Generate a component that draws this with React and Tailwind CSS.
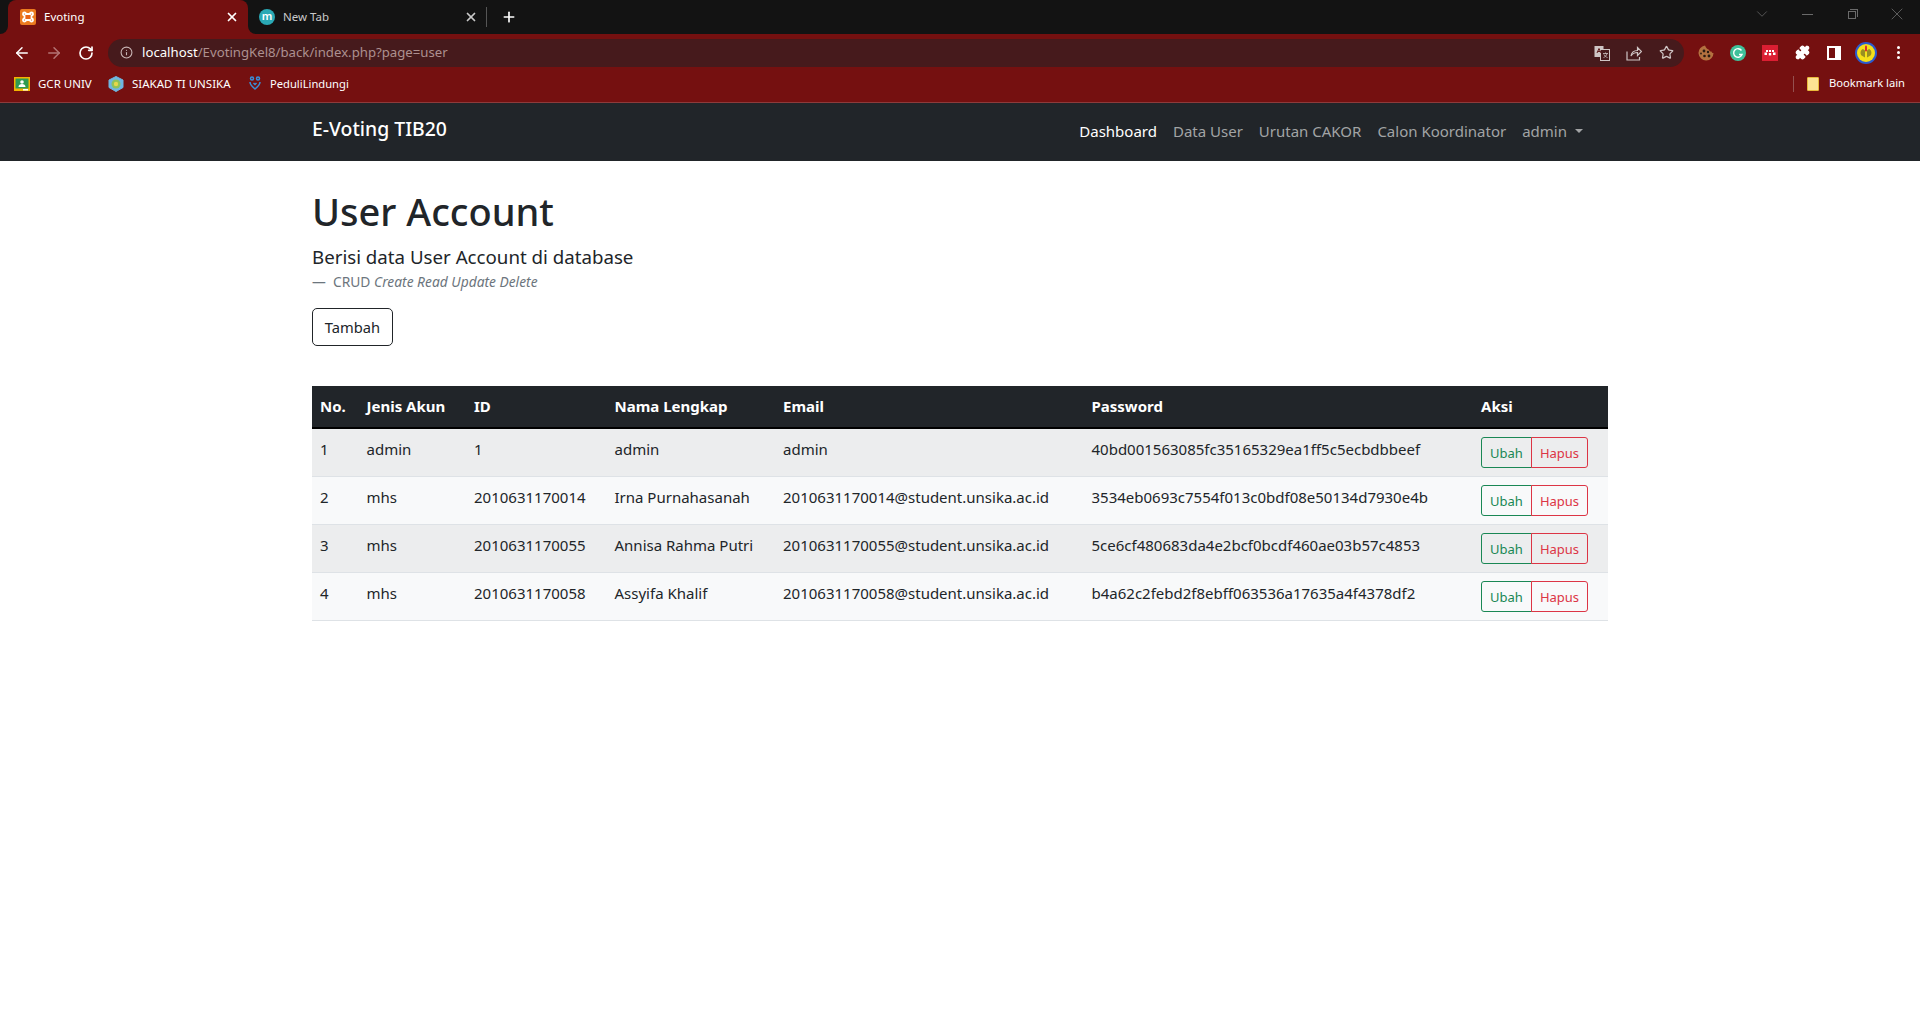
import { ArrowLeft, ArrowRight, RotateCw, Info, X, Plus, Star, Puzzle, ChevronDown } from 'lucide-react';

const users = [
  { no: 1, jenis: 'admin', id: '1', nama: 'admin', email: 'admin', password: '40bd001563085fc35165329ea1ff5c5ecbdbbeef' },
  { no: 2, jenis: 'mhs', id: '2010631170014', nama: 'Irna Purnahasanah', email: '2010631170014@student.unsika.ac.id', password: '3534eb0693c7554f013c0bdf08e50134d7930e4b' },
  { no: 3, jenis: 'mhs', id: '2010631170055', nama: 'Annisa Rahma Putri', email: '2010631170055@student.unsika.ac.id', password: '5ce6cf480683da4e2bcf0bcdf460ae03b57c4853' },
  { no: 4, jenis: 'mhs', id: '2010631170058', nama: 'Assyifa Khalif', email: '2010631170058@student.unsika.ac.id', password: 'b4a62c2febd2f8ebff063536a17635a4f4378df2' },
];

function XamppIcon() {
  return (
    <svg width="16" height="16" viewBox="0 0 16 16" className="shrink-0">
      <rect width="16" height="16" rx="2" fill="#ec7a1f" />
      <path d="M4.500 3.500a1.500 1.500 0 0 1 1.500 1.500h4a1.500 1.500 0 0 1 3 0a1.500 1.500 0 0 1-1.500 1.500v3a1.500 1.500 0 0 1 0 3a1.500 1.500 0 0 1-1.500-1.500H6a1.500 1.500 0 0 1-3 0a1.500 1.500 0 0 1 1.500-1.500v-3a1.500 1.500 0 0 1 0-3z" fill="#e8641a" stroke="#fff" strokeWidth="1.800" />
    </svg>
  );
}

function MeetIcon() {
  return (
    <div className="w-4 h-4 rounded-full bg-[#2aa9b5] text-white text-[11px] leading-[14px] text-center font-semibold shrink-0">m</div>
  );
}

function ClassroomIcon() {
  return (
    <svg width="16" height="14" viewBox="0 0 16 14" className="shrink-0">
      <rect width="16" height="14" fill="#f4b400" />
      <rect x="1.500" y="1.500" width="13" height="10" fill="#2e9b52" />
      <circle cx="8" cy="5" r="1.800" fill="#fff" />
      <path d="M4.500 10c0-2 1.500-3 3.500-3s3.500 1 3.500 3z" fill="#fff" />
      <rect x="9" y="12" width="5" height="1.500" fill="#fff" />
    </svg>
  );
}

function SiakadIcon() {
  return (
    <svg width="16" height="16" viewBox="0 0 16 16" className="shrink-0">
      <path d="M8 0.500l7 3.500v7.500L8 15.500l-7-4V4z" fill="#6fb6e0" strokeLinejoin="round" stroke="#6fb6e0" />
      <circle cx="8" cy="8" r="4.500" fill="#8fc25a" />
      <circle cx="8" cy="8" r="2.200" fill="#e6d84a" />
    </svg>
  );
}

function PeduliIcon() {
  return (
    <svg width="12" height="14" viewBox="0 0 12 14" fill="none" stroke="#3a8fd8" strokeWidth="1.500" className="shrink-0">
      <circle cx="3" cy="2.500" r="1.500" />
      <circle cx="9" cy="2.500" r="1.500" />
      <path d="M1 6c0 3 2.500 5 5 7c2.500-2 5-4 5-7" />
      <path d="M4.500 7l1.500 1.500L7.500 7" />
    </svg>
  );
}

function TranslateIcon() {
  return (
    <svg width="16" height="16" viewBox="0 0 16 16" className="shrink-0">
      <rect x="0.500" y="1" width="9" height="11" fill="#cfc5c5" />
      <rect x="6.500" y="4.500" width="9" height="11" fill="#461a1c" stroke="#cfc5c5" />
      <path d="M3 8l2-4.500L7 8M3.700 6.500h2.600" fill="none" stroke="#5a1a1a" strokeWidth="1" />
      <path d="M9 8.500h5M11.500 7.500v1M13 8.500c-.5 2-2 3.500-3.500 4M10 9.500c.5 1.500 2 2.500 3.500 3" fill="none" stroke="#cfc5c5" strokeWidth="0.800" />
    </svg>
  );
}

function ShareIcon() {
  return (
    <svg width="16" height="16" viewBox="0 0 16 16" fill="none" stroke="#cfc5c5" strokeWidth="1.200" className="shrink-0">
      <path d="M1 6.500V15h12.500v-3" />
      <path d="M5 11c.5-3.500 3-5.500 6.500-5.500V2.500L15.500 6.500l-4 4V7.500C9 7.500 6.500 8.500 5 11z" />
    </svg>
  );
}

function CookieIcon() {
  return (
    <svg width="16" height="16" viewBox="0 0 16 16" className="shrink-0">
      <path d="M7 .5a7.500 7.500 0 1 0 8.500 7.500c-1 .2-2-.5-2-1.500-1.200.2-2.300-.6-2.500-1.800C9.500 4.500 8 3 7 .5z" fill="#b4713f" />
      <circle cx="6" cy="6" r="1.400" fill="#2a1a12" />
      <circle cx="10" cy="7" r="1.200" fill="#2a1a12" />
      <circle cx="11" cy="11" r="1.400" fill="#2a1a12" />
      <circle cx="6.500" cy="11" r="1.300" fill="#2a1a12" />
      <circle cx="3" cy="8.500" r="0.900" fill="#2a1a12" />
    </svg>
  );
}

function GrammarlyIcon() {
  return (
    <svg width="16" height="16" viewBox="0 0 16 16" className="shrink-0">
      <circle cx="8" cy="8" r="8" fill="#3fc09a" />
      <path d="M11.500 5.500A4.300 4.300 0 1 0 12 9.500H9" fill="none" stroke="#fff" strokeWidth="1.400" />
    </svg>
  );
}

function MendeleyIcon() {
  return (
    <svg width="16" height="16" viewBox="0 0 16 16" className="shrink-0">
      <rect width="16" height="16" fill="#dc1e32" />
      <g fill="#fff">
        <rect x="4" y="5" width="2" height="2" />
        <rect x="7" y="5" width="2" height="2" />
        <rect x="10" y="5" width="2" height="2" />
        <rect x="2.500" y="7.500" width="2.500" height="2.500" />
        <rect x="6.800" y="8" width="2.400" height="2.400" />
        <rect x="11" y="7.500" width="2.500" height="2.500" />
      </g>
    </svg>
  );
}

function SidePanelIcon() {
  return (
    <svg width="14" height="14" viewBox="0 0 14 14" className="shrink-0">
      <path d="M0 0h14v14H0z M2 2v10h6V2z" fill="#fff" fillRule="evenodd" />
    </svg>
  );
}

function AvatarIcon() {
  return (
    <svg width="22" height="22" viewBox="0 0 22 22" className="shrink-0">
      <circle cx="11" cy="11" r="11" fill="#2b5bd0" />
      <circle cx="11" cy="11" r="9" fill="#f5e01a" />
      <path d="M8 7c-2 .5-3.500 4-1.500 6.500l3.500 2V8.500zM14 7c2 .5 3.500 4 1.500 6.500l-3.500 2V8.500z" fill="#5a5a28" opacity=".6" />
      <rect x="10" y="3.500" width="2" height="6" rx="1" fill="#d9302c" />
    </svg>
  );
}

function ToolIcon({ children }) {
  return <div className="w-8 flex items-center justify-center">{children}</div>;
}

function BookmarkItem({ icon, label, className }) {
  return (
    <div className={`flex items-center ${className}`}>
      {icon}
      <span>{label}</span>
    </div>
  );
}

function BrowserChrome() {
  return (
    <div className="text-white">
      {/* tab strip */}
      <div className="h-[34px] bg-[#131313] flex pl-2">
        <div className="relative w-[240px] h-[34px] bg-[#751010] rounded-t-lg flex items-center pl-3 pr-2">
          <span className="absolute -left-2 bottom-0 w-2 h-2 bg-[#751010]"><span className="block w-2 h-2 bg-[#131313] rounded-br-lg" /></span>
          <span className="absolute -right-2 bottom-0 w-2 h-2 bg-[#751010]"><span className="block w-2 h-2 bg-[#131313] rounded-bl-lg" /></span>
          <XamppIcon />
          <span className="ml-2 text-[11.5px] flex-1">Evoting</span>
          <X size={14} strokeWidth={3} className="mr-[1px]" />
        </div>
        <div className="w-[238px] h-[34px] flex items-center pl-[11px] pr-2 text-[#c9c9c9]">
          <MeetIcon />
          <span className="ml-2 text-[11.5px] flex-1">New Tab</span>
          <X size={14} strokeWidth={3} />
        </div>
        <div className="w-px h-5 bg-[#555] self-center" />
        <Plus size={16} strokeWidth={2.500} className="self-center ml-[14px]" />
        <div className="flex-1" />
        <div className="flex items-center text-[#6a6a6a] -mt-1.5">
          <ChevronDown size={18} strokeWidth={1} className="mr-[31px]" />
          <div className="w-[11px] h-px bg-[#6a6a6a] mr-[35px]" />
          <div className="relative w-[8px] h-[8px] mt-[2px] border border-[#6a6a6a] mr-[31px]">
            <span className="absolute -top-[3px] -right-[3px] w-[8px] h-[8px] border-t border-r border-[#6a6a6a]" />
          </div>
          <X size={20} strokeWidth={1} className="mr-[13px]" />
        </div>
      </div>

      {/* toolbar */}
      <div className="h-[37px] bg-[#751010] flex items-center pl-[6px] pr-[6px]">
        <ToolIcon><ArrowLeft size={18} strokeWidth={2} /></ToolIcon>
        <ToolIcon><ArrowRight size={18} strokeWidth={2} className="text-[#b47474]" /></ToolIcon>
        <ToolIcon><RotateCw size={16} strokeWidth={2.500} /></ToolIcon>
        <div className="ml-[6px] w-[1576px] h-7 rounded-full bg-[#461a1c] flex items-center pl-3 pr-[2px]">
          <Info size={13} className="text-[#c9b6b6]" />
          <span className="ml-[9px] text-[13.200px] flex-1">
            localhost<span className="text-[#ad9090]">/EvotingKel8/back/index.php?page=user</span>
          </span>
          <ToolIcon><TranslateIcon /></ToolIcon>
          <ToolIcon><ShareIcon /></ToolIcon>
          <ToolIcon><Star size={15} className="text-[#cfc5c5]" /></ToolIcon>
        </div>
        <div className="ml-[6px] flex items-center">
          <ToolIcon><CookieIcon /></ToolIcon>
          <ToolIcon><GrammarlyIcon /></ToolIcon>
          <ToolIcon><MendeleyIcon /></ToolIcon>
          <ToolIcon><Puzzle size={15} fill="#fff" /></ToolIcon>
          <ToolIcon><SidePanelIcon /></ToolIcon>
          <ToolIcon><AvatarIcon /></ToolIcon>
          <ToolIcon>
            <div className="flex flex-col gap-[2px]">
              <span className="w-[3px] h-[3px] bg-white rounded-full" />
              <span className="w-[3px] h-[3px] bg-white rounded-full" />
              <span className="w-[3px] h-[3px] bg-white rounded-full" />
            </div>
          </ToolIcon>
        </div>
      </div>

      {/* bookmarks */}
      <div className="h-[32px] pb-[6px] bg-[#751010] border-b border-[#8d3b3b] flex items-center text-[11.500px] pl-[14px]">
        <BookmarkItem icon={<ClassroomIcon />} label="GCR UNIV" className="gap-2 w-[94px]" />
        <BookmarkItem icon={<SiakadIcon />} label="SIAKAD TI UNSIKA" className="gap-2 w-[141px]" />
        <BookmarkItem icon={<PeduliIcon />} label={<span className="text-[11.200px]">PeduliLindungi</span>} className="gap-[9px]" />
        <div className="flex-1" />
        <div className="w-px h-4 bg-[#94504f] mr-[13px]" />
        <div className="w-[12px] h-[14px] bg-[#fde293] border border-[#e9b93c] rounded-[1px] mr-[10px]" />
        <span className="mr-[15px] text-[11.200px]">Bookmark lain</span>
      </div>
    </div>
  );
}

function NavBar() {
  return (
    <nav className="h-[58px] bg-[#212529] flex justify-center">
      <div className="w-[1296px] flex text-[15px]">
        <a className="text-[19.400px] font-medium text-white mt-[10px] h-8 leading-8">E-Voting TIB20</a>
        <div className="flex-1" />
        <div className="flex items-center gap-[16px] text-[#a2a4a5] mt-[8px] h-[40px] mr-[25px]">
          <a className="text-white">Dashboard</a>
          <a>Data User</a>
          <a>Urutan CAKOR</a>
          <a>Calon Koordinator</a>
          <a className="flex items-center">
            admin
            <span className="ml-2 w-0 h-0 border-x-[4.500px] border-x-transparent border-t-[4.500px] border-t-[#a2a4a5]" />
          </a>
        </div>
      </div>
    </nav>
  );
}

function UserTable() {
  const headers = [
    ['No.', 'w-[46.500px]'],
    ['Jenis Akun', 'w-[107.500px]'],
    ['ID', 'w-[140.500px]'],
    ['Nama Lengkap', 'w-[168.500px]'],
    ['Email', 'w-[308.500px]'],
    ['Password', 'w-[389.500px]'],
    ['Aksi', ''],
  ];

  return (
    <table className="w-full table-fixed border-collapse mt-10 text-[15px] text-[#212529]">
      <thead>
        <tr className="bg-[#212529] text-white border-b-2 border-black h-[42px]">
          {headers.map(([label, width]) => (
            <th key={label} className={`px-2 text-left font-bold ${width}`}>{label}</th>
          ))}
        </tr>
      </thead>
      <tbody>
        {users.map(user => (
          <tr key={user.no} className={`h-12 border-b border-[#dee2e6] ${user.no % 2 ? 'bg-[#ecedee]' : 'bg-[#f8f9fa]'}`}>
            <td className="px-2 pt-2 pb-[15px] leading-6 align-top">{user.no}</td>
            <td className="px-2 pt-2 leading-6 align-top">{user.jenis}</td>
            <td className="px-2 pt-2 leading-6 align-top">{user.id}</td>
            <td className="px-2 pt-2 leading-6 align-top whitespace-nowrap">{user.nama}</td>
            <td className="px-2 pt-2 leading-6 align-top whitespace-nowrap">{user.email}</td>
            <td className="px-2 pt-2 leading-6 align-top whitespace-nowrap">{user.password}</td>
            <td className="px-2 pt-2 pb-0 align-top">
              <div className="flex text-[13px] leading-[19px]">
                <button className="w-[51px] h-[31px] pt-[1px] border border-[#198754] text-[#198754] rounded-l-[3px]">Ubah</button>
                <button className="w-[57px] h-[31px] pt-[1px] -ml-px border border-[#dc3545] text-[#dc3545] rounded-r-[3px]">Hapus</button>
              </div>
            </td>
          </tr>
        ))}
      </tbody>
    </table>
  );
}

export default function App() {
  return (
    <div className="min-h-screen bg-white font-['Noto_Sans',sans-serif] text-[#212529]">
      <BrowserChrome />
      <NavBar />
      <main className="w-[1296px] mx-auto pt-[26px]">
        <h1 className="text-[38px] font-medium leading-[48px]">User Account</h1>
        <p className="text-[18.700px] leading-[30px] mt-[7px]">Berisi data User Account di database</p>
        <p className="text-[13.800px] leading-5 text-[#6c757d]">
          — &nbsp;CRUD <i>Create Read Update Delete</i>
        </p>
        <button className="mt-[16px] w-[81px] h-[38px] border border-[#212529] rounded-[5px] text-[14.700px]">Tambah</button>
        <UserTable />
      </main>
    </div>
  );
}
